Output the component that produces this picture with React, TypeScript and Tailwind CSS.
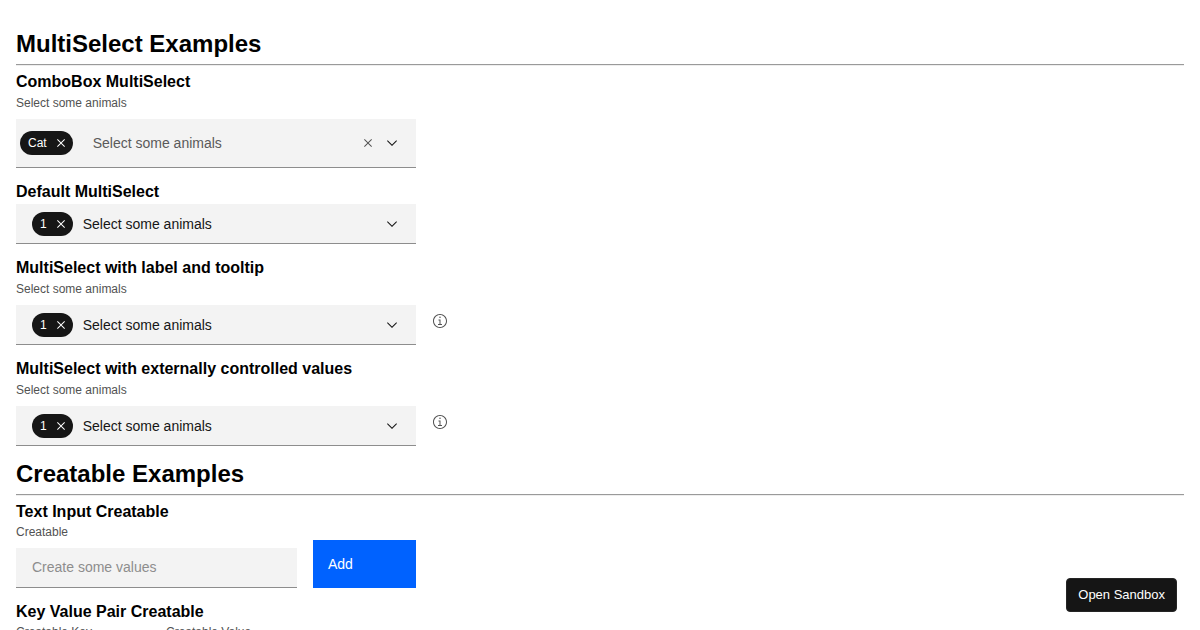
import { useId } from "react";
import type { ReactNode } from "react";

function CloseIcon() {
  return (
    <svg viewBox="0 0 32 32" className="size-4" fill="currentColor" aria-hidden="true">
      <path d="M24 9.4L22.6 8 16 14.6 9.4 8 8 9.4 14.6 16 8 22.6 9.4 24 16 17.4 22.6 24 24 22.6 17.4 16z" />
    </svg>
  );
}

function ChevronIcon() {
  return (
    <svg viewBox="0 0 16 16" className="size-4" fill="currentColor" aria-hidden="true">
      <path d="M8 11L3 6 3.7 5.3 8 9.6 12.3 5.3 13 6z" />
    </svg>
  );
}

function InfoIcon() {
  return (
    <svg viewBox="0 0 16 16" className="size-4" fill="currentColor" aria-hidden="true">
      <path d="M8.5 11L8.5 6.5 6.5 6.5 6.5 7.5 7.5 7.5 7.5 11 6 11 6 12 10 12 10 11zM8 3.5c-.4 0-.8.3-.8.8S7.600 5 8 5c.4 0 .8-.3.8-.8S8.400 3.500 8 3.500z" />
      <path d="M8 15c-3.900 0-7-3.100-7-7s3.100-7 7-7 7 3.100 7 7-3.100 7-7 7zM8 2C4.700 2 2 4.700 2 8s2.700 6 6 6 6-2.700 6-6-2.700-6-6-6z" />
    </svg>
  );
}

function SectionTitle({ children }: { children: ReactNode }) {
  return (
    <>
      <h1 className="text-2xl leading-7 font-bold text-black">{children}</h1>
      <hr className="my-1.5 h-[2px] border-t border-b border-t-[#9a9a9a] border-b-[#eeeeee]" />
    </>
  );
}

function Example({ title, children }: { title: string; children: ReactNode }) {
  return (
    <section className="mb-3.5">
      <h3 className="mb-0.5 text-base leading-5 font-bold text-black">{title}</h3>
      {children}
    </section>
  );
}

function Tag({ children }: { children: ReactNode }) {
  return (
    <span className="flex h-6 shrink-0 items-center gap-1.5 rounded-full bg-[#161616] pr-1 pl-2 text-xs text-white">
      {children}
      <button type="button" aria-label="Clear selection" className="flex size-4 items-center justify-center">
        <CloseIcon />
      </button>
    </span>
  );
}

function ComboBox() {
  const id = useId();
  return (
    <div className="max-w-[400px] pt-px">
      <label htmlFor={id} className="mb-2 block text-xs leading-4 text-[#525252]">
        Select some animals
      </label>
      <div className="flex h-[49px] items-center border-b border-[#8d8d8d] bg-[#f3f3f3] pr-4 pl-1">
        <Tag>Cat</Tag>
        <input
          id={id}
          type="text"
          placeholder="Select some animals"
          className="ml-5 min-w-0 flex-1 bg-transparent text-sm text-[#161616] outline-none placeholder:text-[#5a5a5a]"
        />
        <button type="button" aria-label="Clear all" className="flex size-6 items-center justify-center text-[#525252]">
          <CloseIcon />
        </button>
        <button type="button" aria-label="Open menu" className="ml-1 flex size-4 items-center justify-center text-[#161616]">
          <ChevronIcon />
        </button>
      </div>
    </div>
  );
}

function MultiSelect({ label, tooltip = false }: { label?: string; tooltip?: boolean }) {
  const id = useId();
  return (
    <div>
      {label && (
        <label htmlFor={id} className="mt-[3px] mb-2 block text-xs leading-4 text-[#525252]">
          {label}
        </label>
      )}
      <div className="flex gap-4">
        <div className="flex h-10 w-full max-w-[400px] items-center border-b border-[#8d8d8d] bg-[#f3f3f3] pl-4">
          <Tag>1</Tag>
          <button
            id={id}
            type="button"
            aria-haspopup="listbox"
            className="flex h-full flex-1 items-center justify-between pr-4 pl-2.5 text-sm text-[#161616]"
          >
            Select some animals
            <ChevronIcon />
          </button>
        </div>
        {tooltip && (
          <button type="button" aria-label="More information" className="mt-2 flex size-4 text-[#525252]">
            <InfoIcon />
          </button>
        )}
      </div>
    </div>
  );
}

function TextCreatable() {
  const id = useId();
  return (
    <div className="flex max-w-[400px] items-end gap-4">
      <div className="min-w-0 flex-1">
        <label htmlFor={id} className="mb-2 block text-xs leading-4 text-[#525252]">
          Creatable
        </label>
        <input
          id={id}
          type="text"
          placeholder="Create some values"
          className="block h-10 w-full border-b border-[#8d8d8d] bg-[#f3f3f3] px-4 pb-px text-sm text-[#161616] outline-none placeholder:text-[#8d8d8d]"
        />
      </div>
      <button type="button" className="h-12 w-[103px] bg-[#0062ff] px-[15px] text-left text-sm text-white">
        Add
      </button>
    </div>
  );
}

function KeyValueCreatable() {
  const id = useId();
  const fields = [
    { key: "key", label: "Creatable Key" },
    { key: "value", label: "Creatable Value" },
  ];
  return (
    <div className="flex max-w-[400px] items-end gap-4">
      {fields.map((field) => (
        <div key={field.key} className="w-[134px]">
          <label htmlFor={id + field.key} className="mb-2 block text-xs leading-4 text-[#525252]">
            {field.label}
          </label>
          <input
            id={id + field.key}
            type="text"
            className="block h-10 w-full border-b border-[#8d8d8d] bg-[#f3f3f3] px-4 text-sm outline-none"
          />
        </div>
      ))}
    </div>
  );
}

export default function App() {
  return (
    <div className="min-h-screen bg-white font-['Liberation_Sans',Arial,sans-serif]">
      <main className="px-4 pt-[30px]">
        <SectionTitle>MultiSelect Examples</SectionTitle>
        <Example title="ComboBox MultiSelect">
          <ComboBox />
        </Example>
        <Example title="Default MultiSelect">
          <MultiSelect />
        </Example>
        <Example title="MultiSelect with label and tooltip">
          <MultiSelect label="Select some animals" tooltip />
        </Example>
        <Example title="MultiSelect with externally controlled values">
          <MultiSelect label="Select some animals" tooltip />
        </Example>
        <SectionTitle>Creatable Examples</SectionTitle>
        <Example title="Text Input Creatable">
          <TextCreatable />
        </Example>
        <Example title="Key Value Pair Creatable">
          <KeyValueCreatable />
        </Example>
      </main>
      <button
        type="button"
        className="fixed right-[23px] bottom-[18px] h-[34px] rounded border border-[#252525] bg-[#151515] px-[11px] text-[13px] text-white"
      >
        Open Sandbox
      </button>
    </div>
  );
}
